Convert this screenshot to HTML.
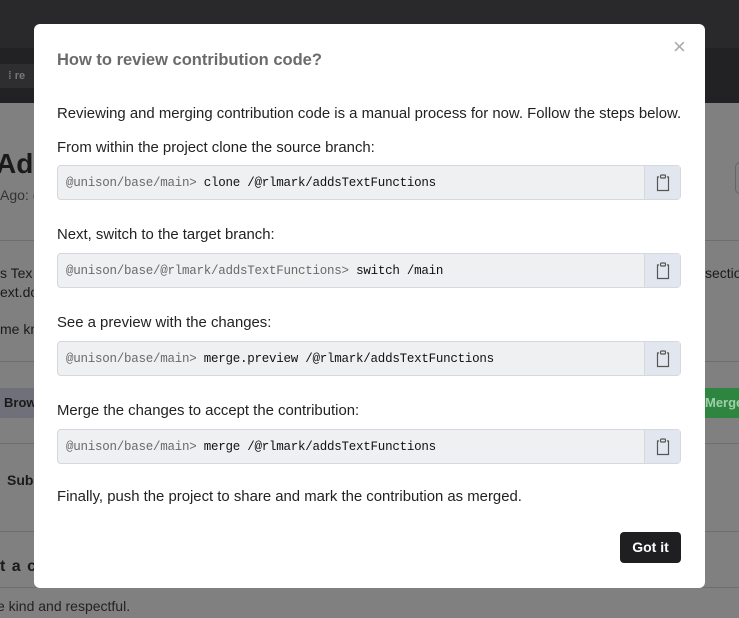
<!DOCTYPE html>
<html><head><meta charset="utf-8"><style>
*{box-sizing:border-box;margin:0;padding:0}
body{width:739px;height:618px;overflow:hidden;position:relative;background:#808081;font-family:"Liberation Sans",sans-serif;}
.a{position:absolute}
.bg{color:#1a1a1a;font-size:14px}
.line{position:absolute;left:0;right:0;height:1px;background:#6e6e70}
.modal{position:absolute;left:34px;top:24px;width:671px;height:564px;background:#fff;border-radius:6px}
.t{position:absolute;left:23px;font-size:14.9px;color:#222;white-space:nowrap}
.code{position:absolute;left:23px;width:624px;height:35px;background:#eff0f2;border:1px solid #d5d8de;border-radius:4px;font-family:"Liberation Mono",monospace;font-size:12.5px;letter-spacing:-0.25px;line-height:34px;padding-left:8px;color:#111;white-space:nowrap}
.code span{color:#6a6a6a}
.cb{position:absolute;right:0;top:0;width:36px;height:33px;background:#e2e7ef;border-left:1px solid #d5d8de}
</style></head><body>
<div class="a" style="left:0;top:0;width:739px;height:48px;background:#29292c"></div>
<div class="a" style="left:0;top:48px;width:739px;height:55px;background:#222225"></div>
<div class="a" style="left:0;top:64px;width:40px;height:24px;background:#2e2e31;color:#777;font-size:11px;font-weight:bold;line-height:24px;padding-left:8px">⁞ re</div>
<div class="a bg" style="left:-4px;top:148px;font-size:28px;font-weight:bold">Add</div>
<div class="a bg" style="left:0;top:187px;font-size:14px;color:#333">Ago: (</div>
<div class="a" style="left:735px;top:162px;width:20px;height:32px;border:1px solid #666;border-radius:5px"></div>
<div class="line" style="top:240px"></div>
<div class="a bg" style="left:0;top:265px">s Tex</div>
<div class="a bg" style="left:0;top:284px">ext.do</div>
<div class="a bg" style="left:0;top:321px">me kn</div>
<div class="a bg" style="left:705px;top:265px">sectio</div>
<div class="line" style="top:361px"></div>
<div class="a" style="left:0;top:388px;width:40px;height:30px;background:#6f7079;color:#1a1a1a;font-weight:bold;font-size:13px;line-height:30px;padding-left:4px">Brow</div>
<div class="a" style="left:705px;top:388px;width:34px;height:30px;background:#2e8540;color:#9fcfa8;font-weight:bold;font-size:13px;line-height:30px;padding-left:0">Merge</div>
<div class="line" style="top:443px"></div>
<div class="a bg" style="left:7px;top:472px;font-weight:bold">Sub</div>
<div class="line" style="top:531px"></div>
<div class="a bg" style="left:0;top:558px;font-weight:bold;font-size:16px;letter-spacing:1px">t a c</div>
<div class="line" style="top:587px"></div>
<div class="a bg" style="left:-3px;top:598px;color:#222">e kind and respectful.</div>

<div class="modal">
<div class="a" style="left:639px;top:12px;font-size:22px;color:#aaa;line-height:22px">×</div>
<div class="t" style="top:27px;font-size:16.5px;font-weight:bold;color:#6b6b6e">How to review contribution code?</div>
<div class="t" style="top:82px">Reviewing and merging contribution code is a manual process for now. Follow the steps below.</div>
<div class="t" style="top:116px">From within the project clone the source branch:</div>
<div class="code" style="top:141px"><span>@unison/base/main&gt;</span> clone /@rlmark/addsTextFunctions<div class="cb"><svg class="a" style="left:11px;top:8px" width="14" height="18" viewBox="0 0 14 18"><path d="M3 3H1.5v13.5h11V3H11" fill="none" stroke="#555" stroke-width="1.2"/><rect x="4.5" y="1" width="5" height="3" rx="1" fill="none" stroke="#555" stroke-width="1.2"/></svg></div></div>
<div class="t" style="top:203px">Next, switch to the target branch:</div>
<div class="code" style="top:229px"><span>@unison/base/@rlmark/addsTextFunctions&gt;</span> switch /main<div class="cb"><svg class="a" style="left:11px;top:8px" width="14" height="18" viewBox="0 0 14 18"><path d="M3 3H1.5v13.5h11V3H11" fill="none" stroke="#555" stroke-width="1.2"/><rect x="4.5" y="1" width="5" height="3" rx="1" fill="none" stroke="#555" stroke-width="1.2"/></svg></div></div>
<div class="t" style="top:291px">See a preview with the changes:</div>
<div class="code" style="top:317px"><span>@unison/base/main&gt;</span> merge.preview /@rlmark/addsTextFunctions<div class="cb"><svg class="a" style="left:11px;top:8px" width="14" height="18" viewBox="0 0 14 18"><path d="M3 3H1.5v13.5h11V3H11" fill="none" stroke="#555" stroke-width="1.2"/><rect x="4.5" y="1" width="5" height="3" rx="1" fill="none" stroke="#555" stroke-width="1.2"/></svg></div></div>
<div class="t" style="top:379px">Merge the changes to accept the contribution:</div>
<div class="code" style="top:405px"><span>@unison/base/main&gt;</span> merge /@rlmark/addsTextFunctions<div class="cb"><svg class="a" style="left:11px;top:8px" width="14" height="18" viewBox="0 0 14 18"><path d="M3 3H1.5v13.5h11V3H11" fill="none" stroke="#555" stroke-width="1.2"/><rect x="4.5" y="1" width="5" height="3" rx="1" fill="none" stroke="#555" stroke-width="1.2"/></svg></div></div>
<div class="t" style="top:465px">Finally, push the project to share and mark the contribution as merged.</div>
<div class="a" style="left:586px;top:508px;width:61px;height:31px;background:#1f1f22;border-radius:4px;color:#fff;font-weight:bold;font-size:14px;line-height:31px;text-align:center">Got it</div>
</div>
</body></html>
